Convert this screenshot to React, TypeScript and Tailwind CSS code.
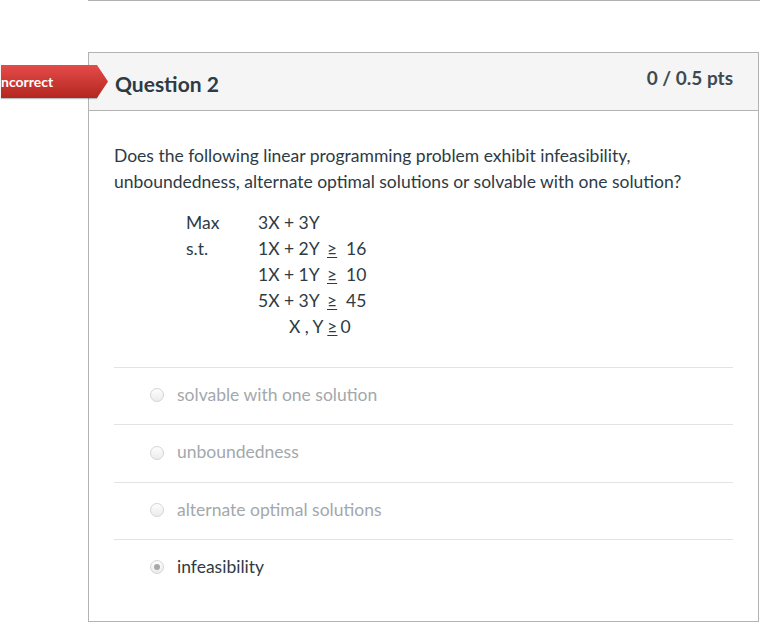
import React from "react";

const Radio = ({ checked }: { checked?: boolean }) => (
  <span className="flex h-[14px] w-[14px] shrink-0 items-center justify-center rounded-full border border-[#d4d4d4] bg-gradient-to-b from-[#fdfdfd] to-[#ececec]">
    {checked && <span className="h-[6px] w-[6px] rounded-full bg-[#a8a8a8]" />}
  </span>
);

const answers = [
  { text: "solvable with one solution", checked: false, h: "h-[57px]" },
  { text: "unboundedness", checked: false, h: "h-[58px]" },
  { text: "alternate optimal solutions", checked: false, h: "h-[57px]" },
  { text: "infeasibility", checked: true, h: "h-[57px]" },
];

const Row = ({ label, expr, rel, val }: { label?: string; expr: string; rel: string; val: string }) => (
  <div className="flex h-[26px] items-center">
    <span className="w-[72px]">{label}</span>
    <span className="w-[69px] whitespace-pre">{expr}</span>
    {rel && <span className="w-[19px] underline underline-offset-2">{rel}</span>}
    <span>{val}</span>
  </div>
);

export default function App() {
  return (
    <div
      className="relative h-[632px] w-[780px] overflow-hidden bg-white text-[#2d3b45]"
      style={{ fontFamily: "Lato, 'Open Sans', sans-serif" }}
    >
      <div className="ml-[88px] h-px w-[672px] bg-[#b0b0b0]" />

      <div className="relative ml-[88px] mt-[51px] w-[671px] border border-[#b3b3b3]">
        {/* Incorrect badge */}
        <div className="absolute left-[-88px] top-[12px] flex h-[33px] items-center">
          <div className="flex h-[33px] w-[96px] items-center bg-gradient-to-b from-[#e54b49] to-[#b3261f] shadow-[0_1px_1px_rgba(0,0,0,0.25)]">
            <span className="ml-[-4px] text-[14px] font-bold text-white">Incorrect</span>
          </div>
          <svg width="11" height="33" viewBox="0 0 11 33" className="block">
            <defs>
              <linearGradient id="rg" x1="0" y1="0" x2="0" y2="1">
                <stop offset="0" stopColor="#e54b49" />
                <stop offset="1" stopColor="#b3261f" />
              </linearGradient>
            </defs>
            <polygon points="0,0 11,16.5 0,33" fill="url(#rg)" />
          </svg>
        </div>

        <div className="flex h-[58px] justify-between border-b border-[#b3b3b3] bg-[#f5f5f5] pl-[26px] pr-[25px]">
          <span className="mt-[18px] text-[21px] font-bold leading-[26px]">Question 2</span>
          <span className="mt-[12px] text-[19px] font-bold leading-[26px] text-[#3d4a52]">0 / 0.5 pts</span>
        </div>

        <div className="px-[25px] pb-[25px] pt-[32px] text-[17.5px]">
          <p className="leading-[26px]">
            Does the following linear programming problem exhibit infeasibility,
            <br />
            unboundedness, alternate optimal solutions or solvable with one solution?
          </p>

          <div className="ml-[72px] mt-[15px]">
            <Row label="Max" expr="3X + 3Y" rel="" val="" />
            <Row label="s.t." expr="1X + 2Y" rel="≥" val="16" />
            <Row expr="1X + 1Y" rel="≥" val="10" />
            <Row expr="5X + 3Y" rel="≥" val="45" />
            <div className="flex h-[26px] items-center pl-[103px]">
              <span className="whitespace-pre">X , Y </span>
              <span className="underline underline-offset-2">≥</span>
              <span className="ml-[3px]">0</span>
            </div>
          </div>

          <div className="mt-[27px]">
            {answers.map((a) => (
              <div key={a.text} className={`flex ${a.h} items-center border-t border-[#e3e3e3] pb-[2px] pl-[36px]`}>
                <Radio checked={a.checked} />
                <span className={`ml-[13px] ${a.checked ? "text-[#2d3b45]" : "text-[#a3a8ac]"}`}>
                  {a.text}
                </span>
              </div>
            ))}
          </div>
        </div>
      </div>
    </div>
  );
}
